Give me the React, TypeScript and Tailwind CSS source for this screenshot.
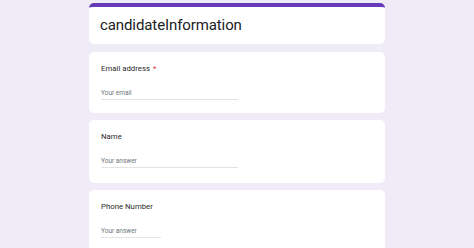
import React from 'react';

const fields = [
  { label: 'Email address', required: true, placeholder: 'Your email', lineW: 'w-[137px]', h: 'h-[61px] mt-[1px]' },
  { label: 'Name', required: false, placeholder: 'Your answer', lineW: 'w-[137px]', h: 'h-[63px]' },
  { label: 'Phone Number', required: false, placeholder: 'Your answer', lineW: 'w-[60px]', h: 'h-[63px]' },
];

export default function App() {
  return (
    <div className="w-[474px] h-[248px] overflow-hidden bg-[#efebf7] flex justify-center pt-[3px]" style={{ fontFamily: 'Roboto, "Liberation Sans", sans-serif' }}>
      <div className="w-[296px] flex flex-col gap-[7px]">
        <div className="h-[41px] shrink-0 bg-white rounded-[5px] border-t-[4px] border-[#673ab7] px-[11px] pt-[8px]">
          <h1 className="text-[15px] leading-[20px] text-[#202124] tracking-[-0.1px]">candidateInformation</h1>
        </div>
        {fields.map((f, i) => (
          <div key={i} className={`${f.h} shrink-0 bg-white rounded-[5px] px-[12px] pt-[11px]`}>
            <div className="text-[7.8px] leading-[11px] text-[#2b2b2b]">
              {f.label}
              {f.required && <span className="text-[#d93025] ml-[3px]">*</span>}
            </div>
            <div className={`${f.lineW} mt-[15px] border-b border-[#e4e4e4] pb-[1px]`}>
              <div className="text-[6.5px] leading-[9px] text-[#70757a]">{f.placeholder}</div>
            </div>
          </div>
        ))}
      </div>
    </div>
  );
}
